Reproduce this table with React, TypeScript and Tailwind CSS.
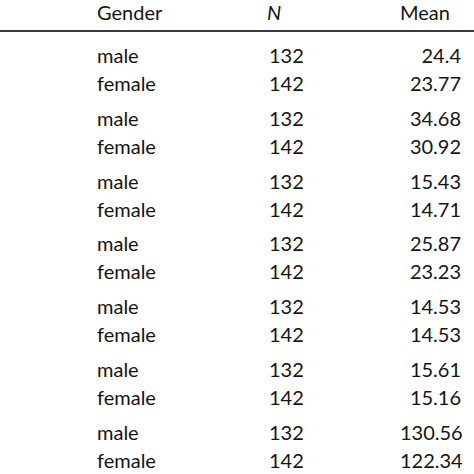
const groups = [
  { male: '24.4', female: '23.77' },
  { male: '34.68', female: '30.92' },
  { male: '15.43', female: '14.71' },
  { male: '25.87', female: '23.23' },
  { male: '14.53', female: '14.53' },
  { male: '15.61', female: '15.16' },
  { male: '130.56', female: '122.34' },
];

function Row({ gender, n, mean }: { gender: string; n: string; mean: string }) {
  return (
    <div className="flex h-[28px] items-center leading-[28px]">
      <div className="w-[172px]">{gender}</div>
      <div className="w-[131px]">{n}</div>
      <div className="w-[61px] text-right">{mean}</div>
    </div>
  );
}

export default function App() {
  return (
    <div
      className="h-[474px] w-[474px] overflow-hidden bg-white text-[20px] text-[#141414]"
      style={{ fontFamily: 'Lato, "Open Sans", sans-serif' }}
    >
      <div className="flex pl-[97px] leading-[24px]">
        <div className="w-[170px]">Gender</div>
        <div className="w-[133px] italic">N</div>
        <div className="w-[61px]">Mean</div>
      </div>
      <div className="mt-[6px] h-[2px] bg-[#3a3a3a]" />
      <div className="mt-[9px] flex flex-col gap-[6.8px] pl-[97px]">
        {groups.map((g, i) => (
          <div key={i}>
            <Row gender="male" n="132" mean={g.male} />
            <Row gender="female" n="142" mean={g.female} />
          </div>
        ))}
      </div>
    </div>
  );
}
